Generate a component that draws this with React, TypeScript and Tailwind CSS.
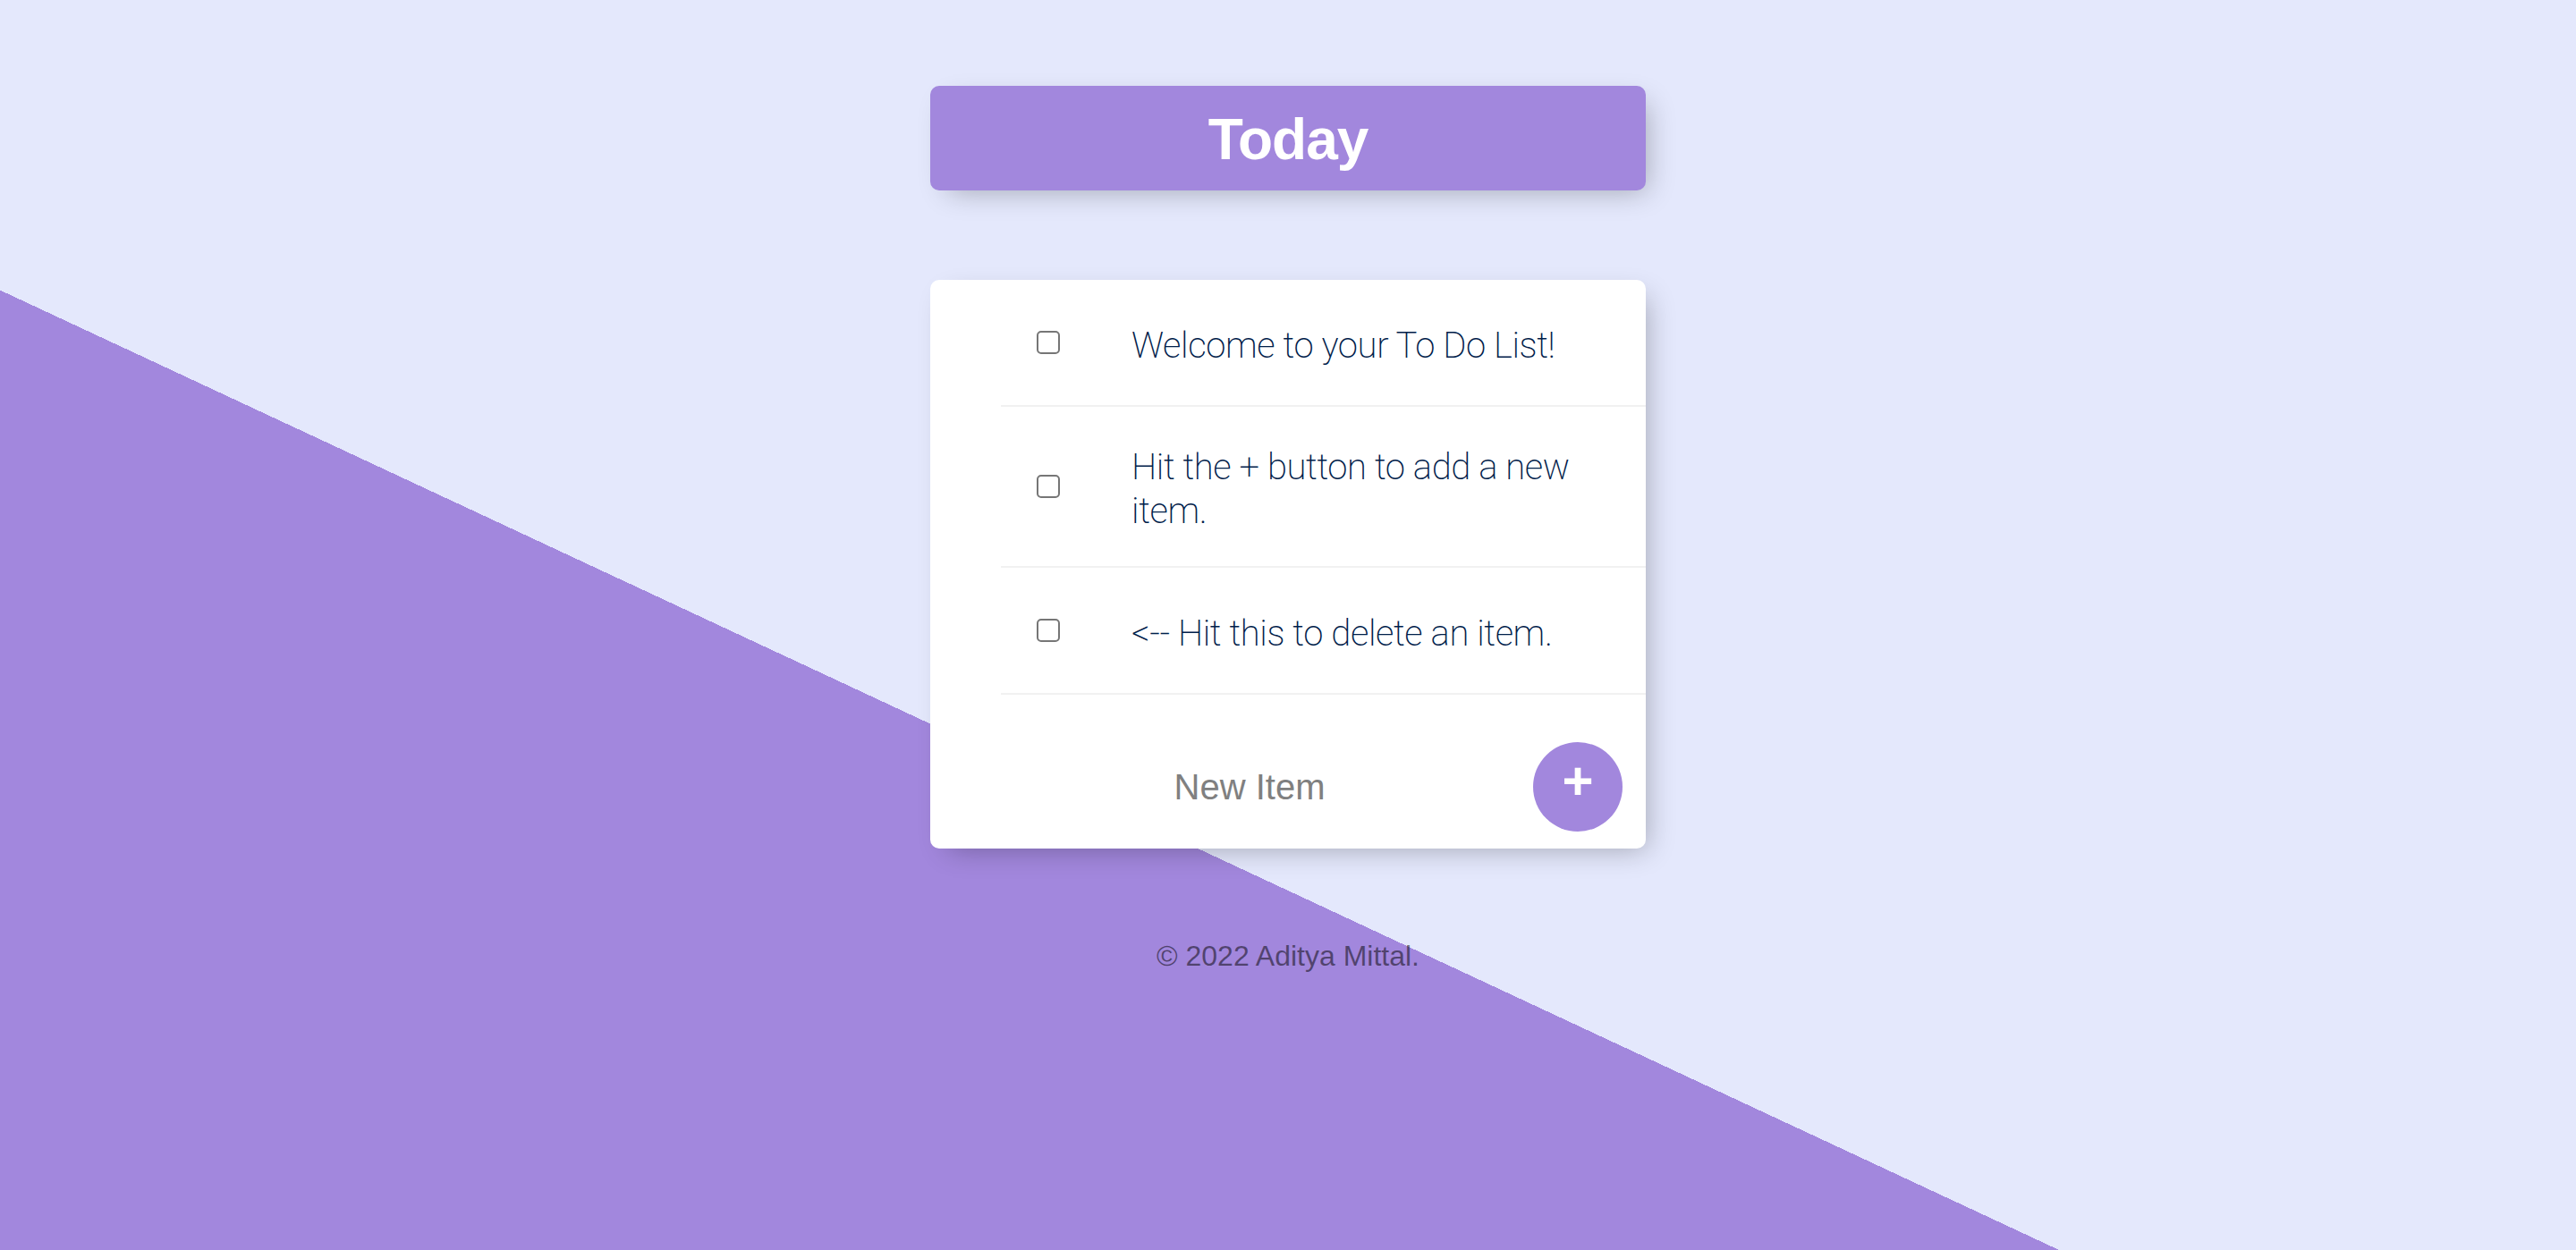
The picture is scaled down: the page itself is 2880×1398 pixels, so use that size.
import React from 'react';

const items = [
    'Welcome to your To Do List!',
    'Hit the + button to add a new item.',
    '<-- Hit this to delete an item.',
];

export default function App() {
    return (
        <div className="min-h-[1992px] bg-[#E4E8FC] bg-[linear-gradient(25deg,#A287DD_50%,#E4E8FC_50%)] pt-[96px] font-['Liberation_Sans',Arial,sans-serif]">

            <div className="w-[800px] mx-auto bg-[#A287DD] rounded-[10px] shadow-[10px_10px_30px_-10px_rgba(0,0,0,0.3)] text-center">
                <h1 className="text-[64px] font-bold text-white leading-[77px] pt-[22px] pb-[18px] tracking-[-1px]">Today</h1>
            </div>

            <div className="w-[800px] mx-auto mt-[100px] bg-white rounded-[10px] shadow-[10px_10px_30px_-10px_rgba(0,0,0,0.3)]">
                <div className="ml-[79px]">
                    {items.map(text => (
                        <div key={text} className="flex items-center min-h-[142px] border-b-2 border-[#F1F1F1]">
                            <input
                                type="checkbox"
                                className="appearance-none shrink-0 mx-[40px] w-[26px] h-[26px] border-2 border-[#767676] rounded-[5px] bg-white"
                            />
                            <p className="px-[40px] pt-[43px] pb-[37px] text-[40px] font-extralight leading-[49px] tracking-[-0.4px] text-[#00204a] font-['Roboto',sans-serif]">
                                {text}
                            </p>
                        </div>
                    ))}
                </div>

                <form className="flex items-center h-[172px] pt-[34px] pl-[44px]">
                    <input
                        type="text"
                        placeholder="New Item"
                        autoComplete="off"
                        className="w-[626px] h-[120px] text-center text-[40px] bg-transparent outline-none placeholder:text-[#808080]"
                    />
                    <button
                        type="button"
                        className="ml-[4px] w-[100px] h-[100px] rounded-full bg-[#A287DD] text-white text-[60px] font-bold leading-none pb-[12px] flex items-center justify-center"
                    >
                        +
                    </button>
                </form>
            </div>

            <footer className="mt-[96px] text-center text-[32px] text-black/50">
                © 2022 Aditya Mittal.
            </footer>

        </div>
    );
}
